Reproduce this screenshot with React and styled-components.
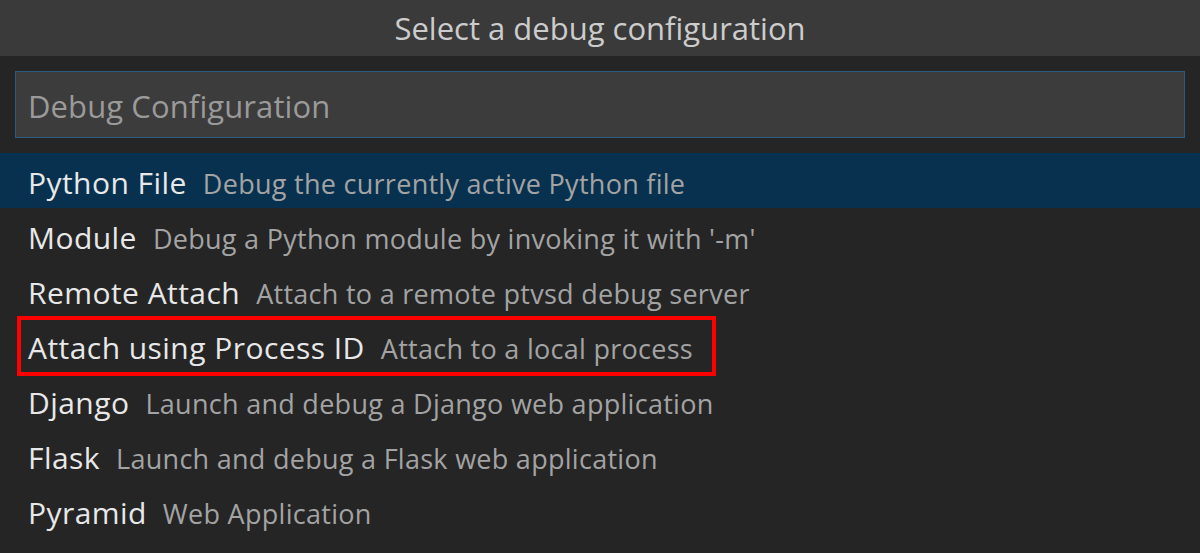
import React from "react";
import styled, { createGlobalStyle } from "styled-components";

const Global = createGlobalStyle`
  html, body { margin: 0; padding: 0; background: #252526; }
  body { width: 1200px; height: 553px; overflow: hidden; font-family: "Open Sans", "Noto Sans", sans-serif; }
`;

const Panel = styled.div`
  width: 1200px;
  height: 553px;
  background: #252526;
  display: flex;
  flex-direction: column;
`;

const TitleBar = styled.div`
  height: 56px;
  background: #3a3a3a;
  color: #cccccc;
  font-size: 31px;
  display: flex;
  align-items: center;
  justify-content: center;
`;

const InputWrap = styled.div`
  padding: 15px 15px 15px 15px;
`;

const Input = styled.div`
  height: 67px;
  box-sizing: border-box;
  background: #3c3c3c;
  border: 1px solid #2b5b82;
  display: flex;
  align-items: center;
  padding-left: 12px;
  padding-top: 2px;
  color: #9a9a9a;
  font-size: 31px;
  letter-spacing: 0.1px;
`;

const List = styled.div`
  display: flex;
  flex-direction: column;
`;

const Row = styled.div`
  height: 55px;
  display: flex;
  align-items: center;
  padding-left: 28px;
  padding-top: 4px;
  box-sizing: border-box;
  background: ${(p) => (p.$selected ? "#07314f" : "transparent")};
  position: relative;
`;

const Item = styled.div`
  display: flex;
  align-items: baseline;
  gap: 16px;
`;

const Label = styled.span`
  color: #e8e8e8;
  font-size: 30px;
  letter-spacing: 0.45px;
`;

const Desc = styled.span`
  color: #a3a3a3;
  font-size: 27px;
  letter-spacing: 0.28px;
`;

const Highlight = styled.div`
  position: absolute;
  left: 17px;
  top: -2px;
  width: 699px;
  height: 60px;
  box-sizing: border-box;
  border: 4px solid #ff0000;
  pointer-events: none;
`;

const items = [
  ["Python File", "Debug the currently active Python file"],
  ["Module", "Debug a Python module by invoking it with '-m'"],
  ["Remote Attach", "Attach to a remote ptvsd debug server"],
  ["Attach using Process ID", "Attach to a local process"],
  ["Django", "Launch and debug a Django web application"],
  ["Flask", "Launch and debug a Flask web application"],
  ["Pyramid", "Web Application"],
];

export default function App() {
  return (
    <Panel>
      <Global />
      <TitleBar>Select a debug configuration</TitleBar>
      <InputWrap>
        <Input>Debug Configuration</Input>
      </InputWrap>
      <List>
        {items.map(([l, d], i) => (
          <Row key={l} $selected={i === 0}>
            {i === 3 && <Highlight />}
            <Item>
              <Label>{l}</Label>
              <Desc>{d}</Desc>
            </Item>
          </Row>
        ))}
      </List>
    </Panel>
  );
}
